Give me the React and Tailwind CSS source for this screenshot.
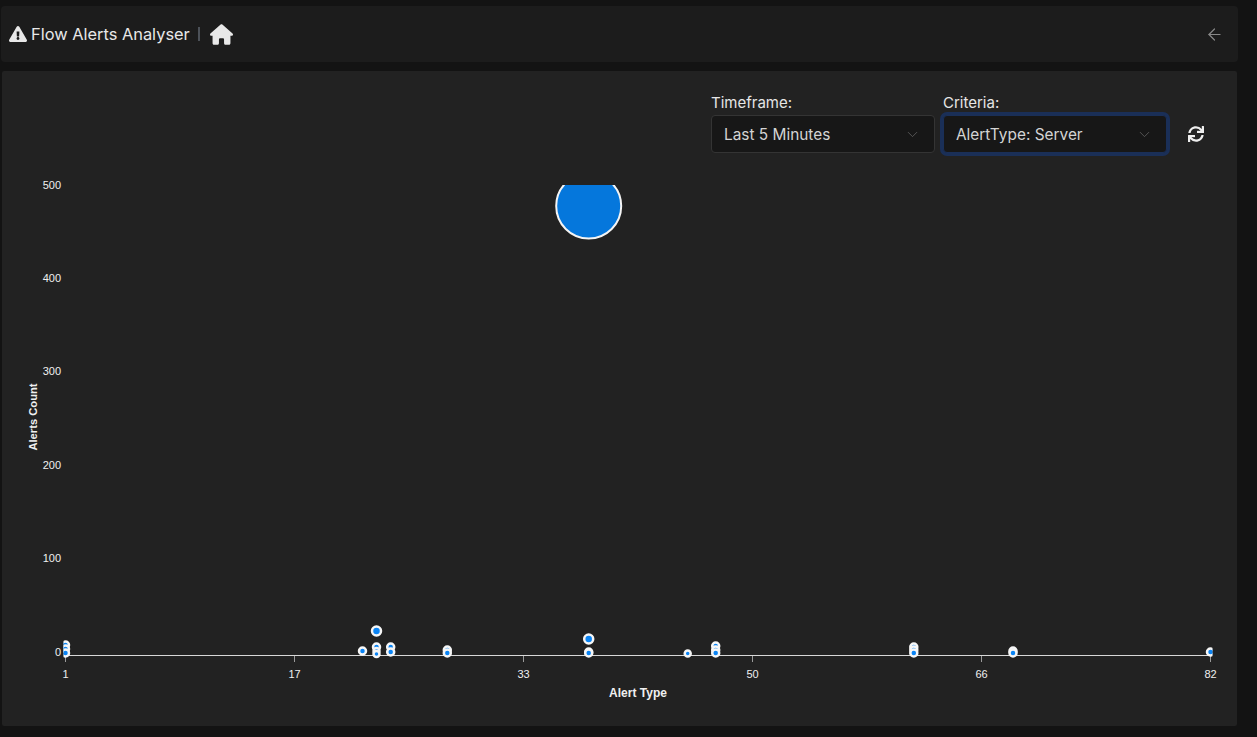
import { ArrowLeft, ChevronDown } from 'lucide-react'
import { FaExclamationTriangle, FaSync } from 'react-icons/fa'
import { FaHouse } from 'react-icons/fa6'

const yTicks = [
  { label: '500', y: 185 },
  { label: '400', y: 278 },
  { label: '300', y: 371 },
  { label: '200', y: 465 },
  { label: '100', y: 558 },
  { label: '0', y: 652 },
]

const xTicks = [
  { label: '1', x: 65.5 },
  { label: '17', x: 294.5 },
  { label: '33', x: 523.5 },
  { label: '50', x: 752.5 },
  { label: '66', x: 981.5 },
  { label: '82', x: 1210.5 },
]

// x, y, r in page pixels, the viewBox of the chart starts at the card corner
const dots = [
  [65.5, 645, 3.5], [65.5, 649, 3.5], [65.5, 653, 3.5],
  [362.5, 651, 3.5],
  [376.5, 631, 4.5], [376.5, 647, 3.5], [376.5, 651, 3], [376.5, 654, 3],
  [390.7, 647, 3.5], [390.7, 652, 3.5],
  [447.3, 650, 3.5], [447.3, 653, 3.5],
  [588.7, 639, 4.5], [588.7, 652, 3.5], [588.7, 653, 3.5],
  [687.7, 653.5, 3],
  [715.7, 646, 3.5], [715.7, 650, 3.5], [715.7, 653, 3.5],
  [913.8, 647, 3.5], [913.8, 650, 3.5], [913.8, 653, 3.5],
  [1013, 651, 3.5], [1013, 653, 3.5],
  [1210.5, 652, 3.5],
]

function Select({ label, value, focused }) {
  return (
    <div className="w-[224px]">
      <div className="text-[15px] leading-5 mb-[2px] text-[#e6e6e6]">{label}</div>
      <div
        className={`h-[38px] rounded-[4px] bg-[#171717] flex items-center justify-between pl-3 pr-[13px] text-[#d4d4d4] text-[15.4px] border ${
          focused ? 'border-[#1a2f57] shadow-[0_0_0_3px_#1a2f57]' : 'border-[#343434]'
        }`}
      >
        <span className="pt-px">{value}</span>
        <ChevronDown size={17} strokeWidth={1} className="text-[#6b6b6b]" />
      </div>
    </div>
  )
}

function Chart() {
  return (
    <svg viewBox="2 165 1235 555" className="w-[1235px] h-[555px] mt-3 block">
      <defs>
        <clipPath id="plot">
          <rect x="63.5" y="185" width="1149" height="475" />
        </clipPath>
      </defs>
      <g fontFamily="'Liberation Sans', sans-serif" fontSize="11" fill="#f0f0f0">
        {yTicks.map((t) => (
          <text key={t.label} x="61" y={t.y + 3.5} textAnchor="end">{t.label}</text>
        ))}
        {xTicks.map((t) => (
          <g key={t.label}>
            <line x1={t.x} x2={t.x} y1="656" y2="662" stroke="#9a9a9a" />
            <text x={t.x} y="678" textAnchor="middle">{t.label}</text>
          </g>
        ))}
        <text x="638" y="696.5" textAnchor="middle" fontWeight="700" fontSize="12">Alert Type</text>
        <text
          x="37"
          y="417"
          textAnchor="middle"
          fontWeight="700"
          fontSize="11.2"
          transform="rotate(-90 37 417)"
        >
          Alerts Count
        </text>
      </g>
      <line x1="65" x2="1211" y1="655.5" y2="655.5" stroke="#d8d8d8" />
      <g clipPath="url(#plot)">
        <circle cx="588.7" cy="206" r="32.5" fill="#0577dc" stroke="#f4f4f4" strokeWidth="2" />
        {dots.map(([x, y, r], i) => (
          <circle key={i} cx={x} cy={y} r={r} fill="#0a84f5" stroke="#f6f6f6" strokeWidth="2.5" />
        ))}
      </g>
    </svg>
  )
}

export default function App() {
  return (
    <div className="h-[737px] overflow-hidden bg-[#131313] pt-[6px] pl-px pr-[19px] flex flex-col gap-[9px] font-['Inter',sans-serif]">
      <header className="h-[56px] shrink-0 rounded-[4px] bg-[#1c1c1c] flex items-center pl-[8px] pr-[14px] text-[#e8e8e8]">
        <FaExclamationTriangle size={18} />
        <span className="ml-[4px] text-[16.4px]">Flow Alerts Analyser</span>
        <span className="ml-2 w-[2px] h-[14px] bg-[#4c5158]" />
        <FaHouse size={23} className="ml-[10px]" />
        <ArrowLeft size={19} strokeWidth={1.5} className="ml-auto text-[#888888]" />
      </header>
      <main className="h-[655px] shrink-0 ml-px w-[1235px] rounded-[2px] bg-[#222222] pt-[22px]">
        <div className="flex justify-end gap-2 pr-[70px] relative">
          <Select label="Timeframe:" value="Last 5 Minutes" />
          <Select label="Criteria:" value="AlertType: Server" focused />
          <button className="absolute right-[33px] top-[33px] text-[#efefef]">
            <FaSync size={16} />
          </button>
        </div>
        <Chart />
      </main>
    </div>
  )
}
